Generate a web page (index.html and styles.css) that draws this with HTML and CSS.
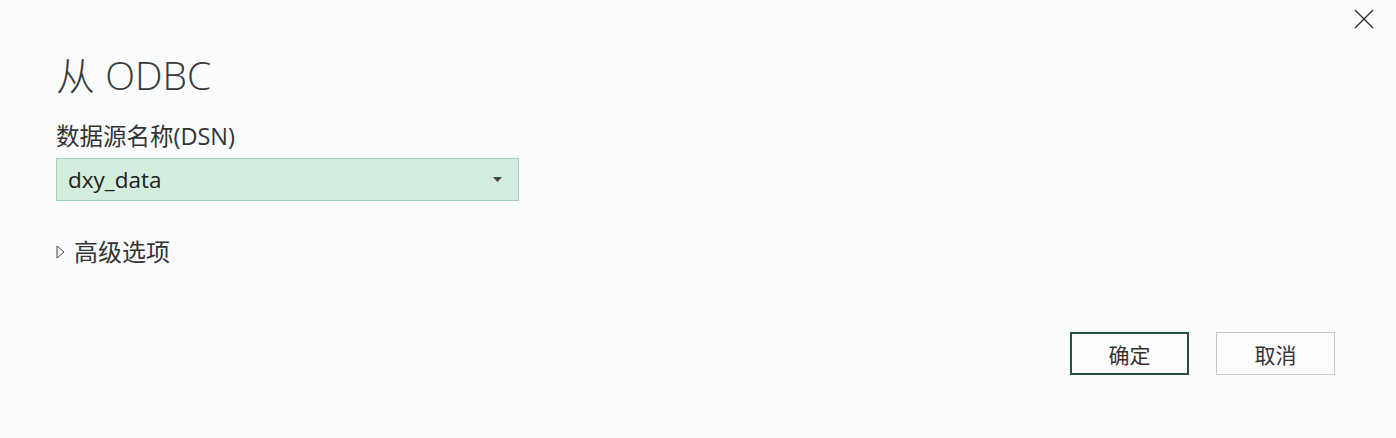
FILE: index.html
```html
<!DOCTYPE html>
<html lang="zh-CN">
<head>
<meta charset="utf-8">
<link rel="stylesheet" href="styles.css">
</head>
<body>
<div class="dialog">
  <button class="close" aria-label="关闭">
    <svg width="20" height="20" viewBox="0 0 20 20"><path d="M1 1L19 19M19 1L1 19" stroke="#333" stroke-width="1.4" fill="none"/></svg>
  </button>
  <h1 class="title">从 ODBC</h1>
  <div class="label">数据源名称(DSN)</div>
  <div class="select">
    <span class="value">dxy_data</span>
    <svg class="caret" width="9" height="5" viewBox="0 0 9 5"><path d="M0 0H9L4.5 5Z" fill="#444"/></svg>
  </div>
  <div class="advanced">
    <svg class="tri" width="9" height="14" viewBox="0 0 9 14"><path d="M1 1L8 7L1 13Z" stroke="#444" stroke-width="1" fill="none"/></svg>
    <span>高级选项</span>
  </div>
  <div class="actions">
    <button class="btn primary">确定</button>
    <button class="btn">取消</button>
  </div>
</div>
</body>
</html>
```
FILE: styles.css
```css
html, body {
  margin: 0;
  padding: 0;
  background: #fbfcfe;
}
.dialog {
  position: relative;
  width: 1396px;
  height: 438px;
  box-sizing: border-box;
  padding: 49px 0 0 56px;
  font-family: "Open Sans", "Noto Sans CJK SC", sans-serif;
  color: #333;
}
.close {
  position: absolute;
  top: 9px;
  right: 22px;
  border: 0;
  background: none;
  padding: 0;
  width: 20px;
  height: 20px;
}
.close svg { display: block; }
.title {
  margin: 0;
  font-weight: 300;
  font-size: 39px;
  line-height: 52px;
  color: #3a3a3a;
}
.label {
  margin-top: 20px;
  font-size: 23.5px;
  line-height: 30px;
}
.select {
  margin-top: 7px;
  width: 463px;
  height: 43px;
  box-sizing: border-box;
  background: #d3eedf;
  border: 1px solid #a3d2b8;
  display: flex;
  align-items: center;
  justify-content: space-between;
  padding: 0 16px 0 11px;
}
.value {
  font-size: 22.5px;
  color: #222;
}
.caret { display: block; }
.advanced {
  margin-top: 36px;
  display: flex;
  align-items: center;
  gap: 9px;
  font-size: 24px;
  line-height: 30px;
}
.tri { display: block; }
.actions {
  position: absolute;
  right: 61px;
  top: 332px;
  display: flex;
  gap: 27px;
}
.btn {
  width: 119px;
  height: 43px;
  box-sizing: border-box;
  background: #fdfdfe;
  border: 1px solid #c8c8cc;
  font-family: "Open Sans", "Noto Sans CJK SC", sans-serif;
  font-size: 21px;
  color: #333;
  padding: 0;
}
.btn.primary {
  border: 2px solid #264f45;
}
```
